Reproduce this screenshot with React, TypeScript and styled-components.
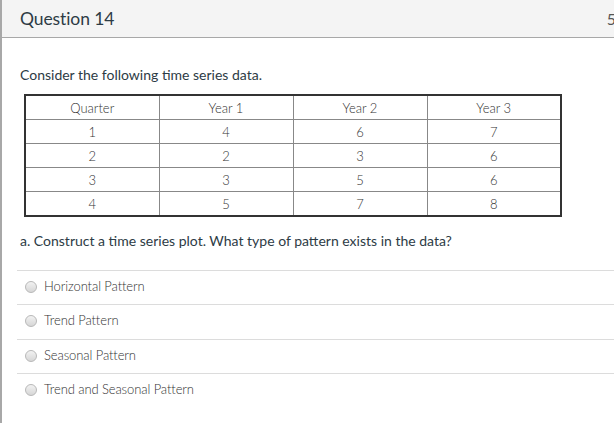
import React from "react";
import styled, { createGlobalStyle } from "styled-components";

const GlobalStyle = createGlobalStyle`
  html, body {
    margin: 0;
    padding: 0;
    background: #fff;
  }
  body {
    font-family: Lato, "Liberation Sans", sans-serif;
    color: #2d3b45;
  }
`;

const rows = [
  ["1", "4", "6", "7"],
  ["2", "2", "3", "6"],
  ["3", "3", "5", "6"],
  ["4", "5", "7", "8"],
];

const options = [
  "Horizontal Pattern",
  "Trend Pattern",
  "Seasonal Pattern",
  "Trend and Seasonal Pattern",
];

const App: React.FC = () => {
  return (
    <>
      <GlobalStyle />
      <Card>
        <Header>
          <Title>Question 14</Title>
          <Points>5</Points>
        </Header>
        <Body>
          <Intro>Consider the following time series data.</Intro>
          <DataTable>
            <thead>
              <tr>
                <Th>Quarter</Th>
                <Th>Year 1</Th>
                <Th>Year 2</Th>
                <Th>Year 3</Th>
              </tr>
            </thead>
            <tbody>
              {rows.map((r) => (
                <tr key={r[0]}>
                  {r.map((v, i) => (
                    <Td key={i}>{v}</Td>
                  ))}
                </tr>
              ))}
            </tbody>
          </DataTable>
          <Prompt>a. Construct a time series plot. What type of pattern exists in the data?</Prompt>
          <Answers>
            {options.map((o) => (
              <Answer key={o}>
                <Radio />
                <AnswerText>{o}</AnswerText>
              </Answer>
            ))}
          </Answers>
        </Body>
      </Card>
    </>
  );
};

export default App;

const Card = styled.div`
  width: 614px;
  height: 423px;
  border-left: 2px solid #a8a8a8;
  box-sizing: border-box;
  overflow: hidden;
`;

const Header = styled.div`
  height: 37px;
  background: #f4f4f4;
  border-bottom: 1px solid #a8a8a8;
  display: flex;
  align-items: center;
  justify-content: space-between;
  padding: 0 0 0 18px;
`;

const Title = styled.div`
  font-size: 17.5px;
  color: #2d3b45;
  letter-spacing: -0.1px;
`;

const Points = styled.div`
  font-size: 16px;
  color: #555;
  margin-right: -2px;
`;

const Body = styled.div`
  padding: 0 0 0 15px;
`;

const Intro = styled.p`
  margin: 28px 0 0 3px;
  font-size: 14px;
  line-height: 18px;
  color: #2d3b45;
`;

const DataTable = styled.table`
  margin: 10px 0 0 7px;
  width: 538px;
  border-collapse: collapse;
  border: 2px solid #333;
  table-layout: fixed;
`;

const Th = styled.th`
  font-weight: 300;
  font-size: 13px;
  color: #333;
  height: 23px;
  padding: 0;
  border: 1px solid #888;
  text-align: center;
`;

const Td = styled.td`
  font-size: 13px;
  font-weight: 300;
  color: #333;
  height: 23px;
  padding: 0;
  border: 1px solid #888;
  text-align: center;
`;

const Prompt = styled.p`
  margin: 15px 0 0 3px;
  font-size: 14px;
  line-height: 18px;
  color: #2d3b45;
`;

const Answers = styled.div`
  margin-top: 20px;
`;

const Answer = styled.div`
  display: flex;
  align-items: flex-start;
  height: 34.3px;
  border-top: 1px solid #dcdcdc;
  padding: 8px 0 0 8px;
  box-sizing: border-box;
`;

const Radio = styled.span`
  width: 10px;
  height: 10px;
  margin-top: 2px;
  border-radius: 50%;
  border: 1px solid #b8b8b8;
  background: linear-gradient(#f2f2f2, #d6d6d6);
  flex-shrink: 0;
`;

const AnswerText = styled.span`
  margin-left: 7px;
  font-size: 13px;
  line-height: 15px;
  font-weight: 300;
  color: #333;
  letter-spacing: -0.1px;
`;
